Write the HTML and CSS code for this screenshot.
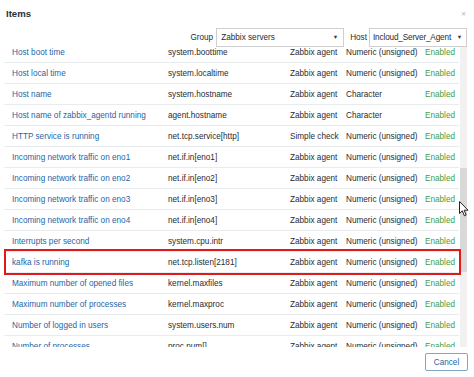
FILE: index.html
```html
<!DOCTYPE html>
<html lang="en">
<head>
    <meta charset="UTF-8">
    <title>Items</title>
    <link rel="stylesheet" href="styles.css">
</head>
<body>

<div class="dialog">
    <div class="head">
        <h4 class="title">Items</h4>
        <span class="close">&#x2715;</span>
    </div>

    <div class="filters">
        <label class="flabel">Group</label>
        <div class="select group-select"><span>Zabbix servers</span><span class="arrow">&#9660;</span></div>
        <label class="flabel host-label">Host</label>
        <div class="select host-select"><span>Incloud_Server_Agent</span><span class="arrow">&#9660;</span></div>
    </div>

    <div class="list">
        <div class="rows">
            <div class="rows-inner">
                <div class="row"><a class="name">Host boot time</a><span>system.boottime</span><span>Zabbix agent</span><span>Numeric (unsigned)</span><span class="status">Enabled</span></div>
                <div class="row"><a class="name">Host local time</a><span>system.localtime</span><span>Zabbix agent</span><span>Numeric (unsigned)</span><span class="status">Enabled</span></div>
                <div class="row"><a class="name">Host name</a><span>system.hostname</span><span>Zabbix agent</span><span>Character</span><span class="status">Enabled</span></div>
                <div class="row"><a class="name">Host name of zabbix_agentd running</a><span>agent.hostname</span><span>Zabbix agent</span><span>Character</span><span class="status">Enabled</span></div>
                <div class="row"><a class="name">HTTP service is running</a><span>net.tcp.service[http]</span><span>Simple check</span><span>Numeric (unsigned)</span><span class="status">Enabled</span></div>
                <div class="row"><a class="name">Incoming network traffic on eno1</a><span>net.if.in[eno1]</span><span>Zabbix agent</span><span>Numeric (unsigned)</span><span class="status">Enabled</span></div>
                <div class="row"><a class="name">Incoming network traffic on eno2</a><span>net.if.in[eno2]</span><span>Zabbix agent</span><span>Numeric (unsigned)</span><span class="status">Enabled</span></div>
                <div class="row"><a class="name">Incoming network traffic on eno3</a><span>net.if.in[eno3]</span><span>Zabbix agent</span><span>Numeric (unsigned)</span><span class="status">Enabled</span></div>
                <div class="row"><a class="name">Incoming network traffic on eno4</a><span>net.if.in[eno4]</span><span>Zabbix agent</span><span>Numeric (unsigned)</span><span class="status">Enabled</span></div>
                <div class="row"><a class="name">Interrupts per second</a><span>system.cpu.intr</span><span>Zabbix agent</span><span>Numeric (unsigned)</span><span class="status">Enabled</span></div>
                <div class="row"><a class="name">kafka is running</a><span>net.tcp.listen[2181]</span><span>Zabbix agent</span><span>Numeric (unsigned)</span><span class="status">Enabled</span></div>
                <div class="row"><a class="name">Maximum number of opened files</a><span>kernel.maxfiles</span><span>Zabbix agent</span><span>Numeric (unsigned)</span><span class="status">Enabled</span></div>
                <div class="row"><a class="name">Maximum number of processes</a><span>kernel.maxproc</span><span>Zabbix agent</span><span>Numeric (unsigned)</span><span class="status">Enabled</span></div>
                <div class="row"><a class="name">Number of logged in users</a><span>system.users.num</span><span>Zabbix agent</span><span>Numeric (unsigned)</span><span class="status">Enabled</span></div>
                <div class="row"><a class="name">Number of processes</a><span>proc.num[]</span><span>Zabbix agent</span><span>Numeric (unsigned)</span><span class="status">Enabled</span></div>
            </div>
        </div>
        <div class="scrollbar"><div class="thumb"></div></div>

        <!-- red highlight drawn over the kafka row -->
        <div class="mark"></div>

        <!-- mouse pointer -->
        <svg class="cursor" width="10" height="16" viewBox="0 0 10 16">
            <path d="M0.5 0.5 L0.5 12.5 L3.3 9.8 L5.4 14.8 L7.2 14 L5.1 9.2 L9 9.2 Z" fill="#fff" stroke="#222" stroke-width="1"/>
        </svg>
    </div>

    <div class="foot">
        <button class="btn">Cancel</button>
    </div>
</div>

</body>
</html>
```

FILE: styles.css
```css
body {
    margin: 0;
    background-color: #fff;
    font-family: "Liberation Sans", Arial, sans-serif;
    font-size: 8.2px;
    color: #1f2c33;
}
.dialog {
    width: 474px;
    height: 377px;
    overflow: hidden;
}
.head {
    display: flex;
    align-items: center;
    height: 27px;
    padding: 0 8px 0 6px;
}
.title {
    margin: 0;
    font-size: 9.6px;
    font-weight: bold;
    color: #2a3338;
}
.close {
    margin-left: auto;
    font-size: 6px;
    color: #b0b0b0;
}
.filters {
    display: flex;
    justify-content: flex-end;
    align-items: center;
    height: 20px;
    padding-right: 7px;
}
.flabel {
    margin-right: 3px;
}
.host-label {
    margin-left: 6px;
    margin-right: 2px;
}
.select {
    display: flex;
    align-items: center;
    justify-content: space-between;
    box-sizing: border-box;
    height: 19px;
    padding: 0 5px 0 4px;
    border: 1px solid #cfcfcf;
    background-color: #fff;
    white-space: nowrap;
}
.group-select {
    width: 128px;
}
.host-select {
    width: 98px;
    padding-left: 3px;
    padding-right: 4px;
    letter-spacing: -0.15px;
}
.arrow {
    margin-left: 4px;
    font-size: 5.5px;
    color: #333;
}
.list {
    position: relative;
    display: flex;
    height: 300px;
    padding-left: 4px;
}
.rows {
    width: 455px;
    overflow: hidden;
}
.rows-inner {
    margin-top: -5px;
}
.row {
    display: grid;
    grid-template-columns: 160px 122px 56px 79px 38px;
    align-items: center;
    box-sizing: border-box;
    height: 21px;
    border-bottom: 1px solid #e9ecee;
    white-space: nowrap;
}
.row span {
    padding-left: 4px;
}
.row .name {
    padding-left: 8px;
    color: #1f65a6;
}
.row .status {
    color: #429e47;
}
.mark {
    position: absolute;
    left: 4px;
    top: 202px;
    width: 457px;
    height: 26px;
    box-sizing: border-box;
    border: 2px solid #e01a1a;
}
.scrollbar {
    position: relative;
    width: 7px;
    margin-left: 1px;
    background-color: #f1f1f1;
}
.thumb {
    position: absolute;
    top: 121px;
    left: 0;
    width: 7px;
    height: 104px;
    background-color: #d9d9d9;
}
.cursor {
    position: absolute;
    left: 459px;
    top: 154px;
}
.foot {
    display: flex;
    justify-content: flex-end;
    padding: 6px 6px 0 0;
}
.btn {
    width: 43px;
    height: 18px;
    padding: 0;
    border: 1px solid #7fa6c4;
    border-radius: 2px;
    background-color: #fff;
    font-family: "Liberation Sans", Arial, sans-serif;
    font-size: 8.2px;
    color: #1f65a6;
}
```
